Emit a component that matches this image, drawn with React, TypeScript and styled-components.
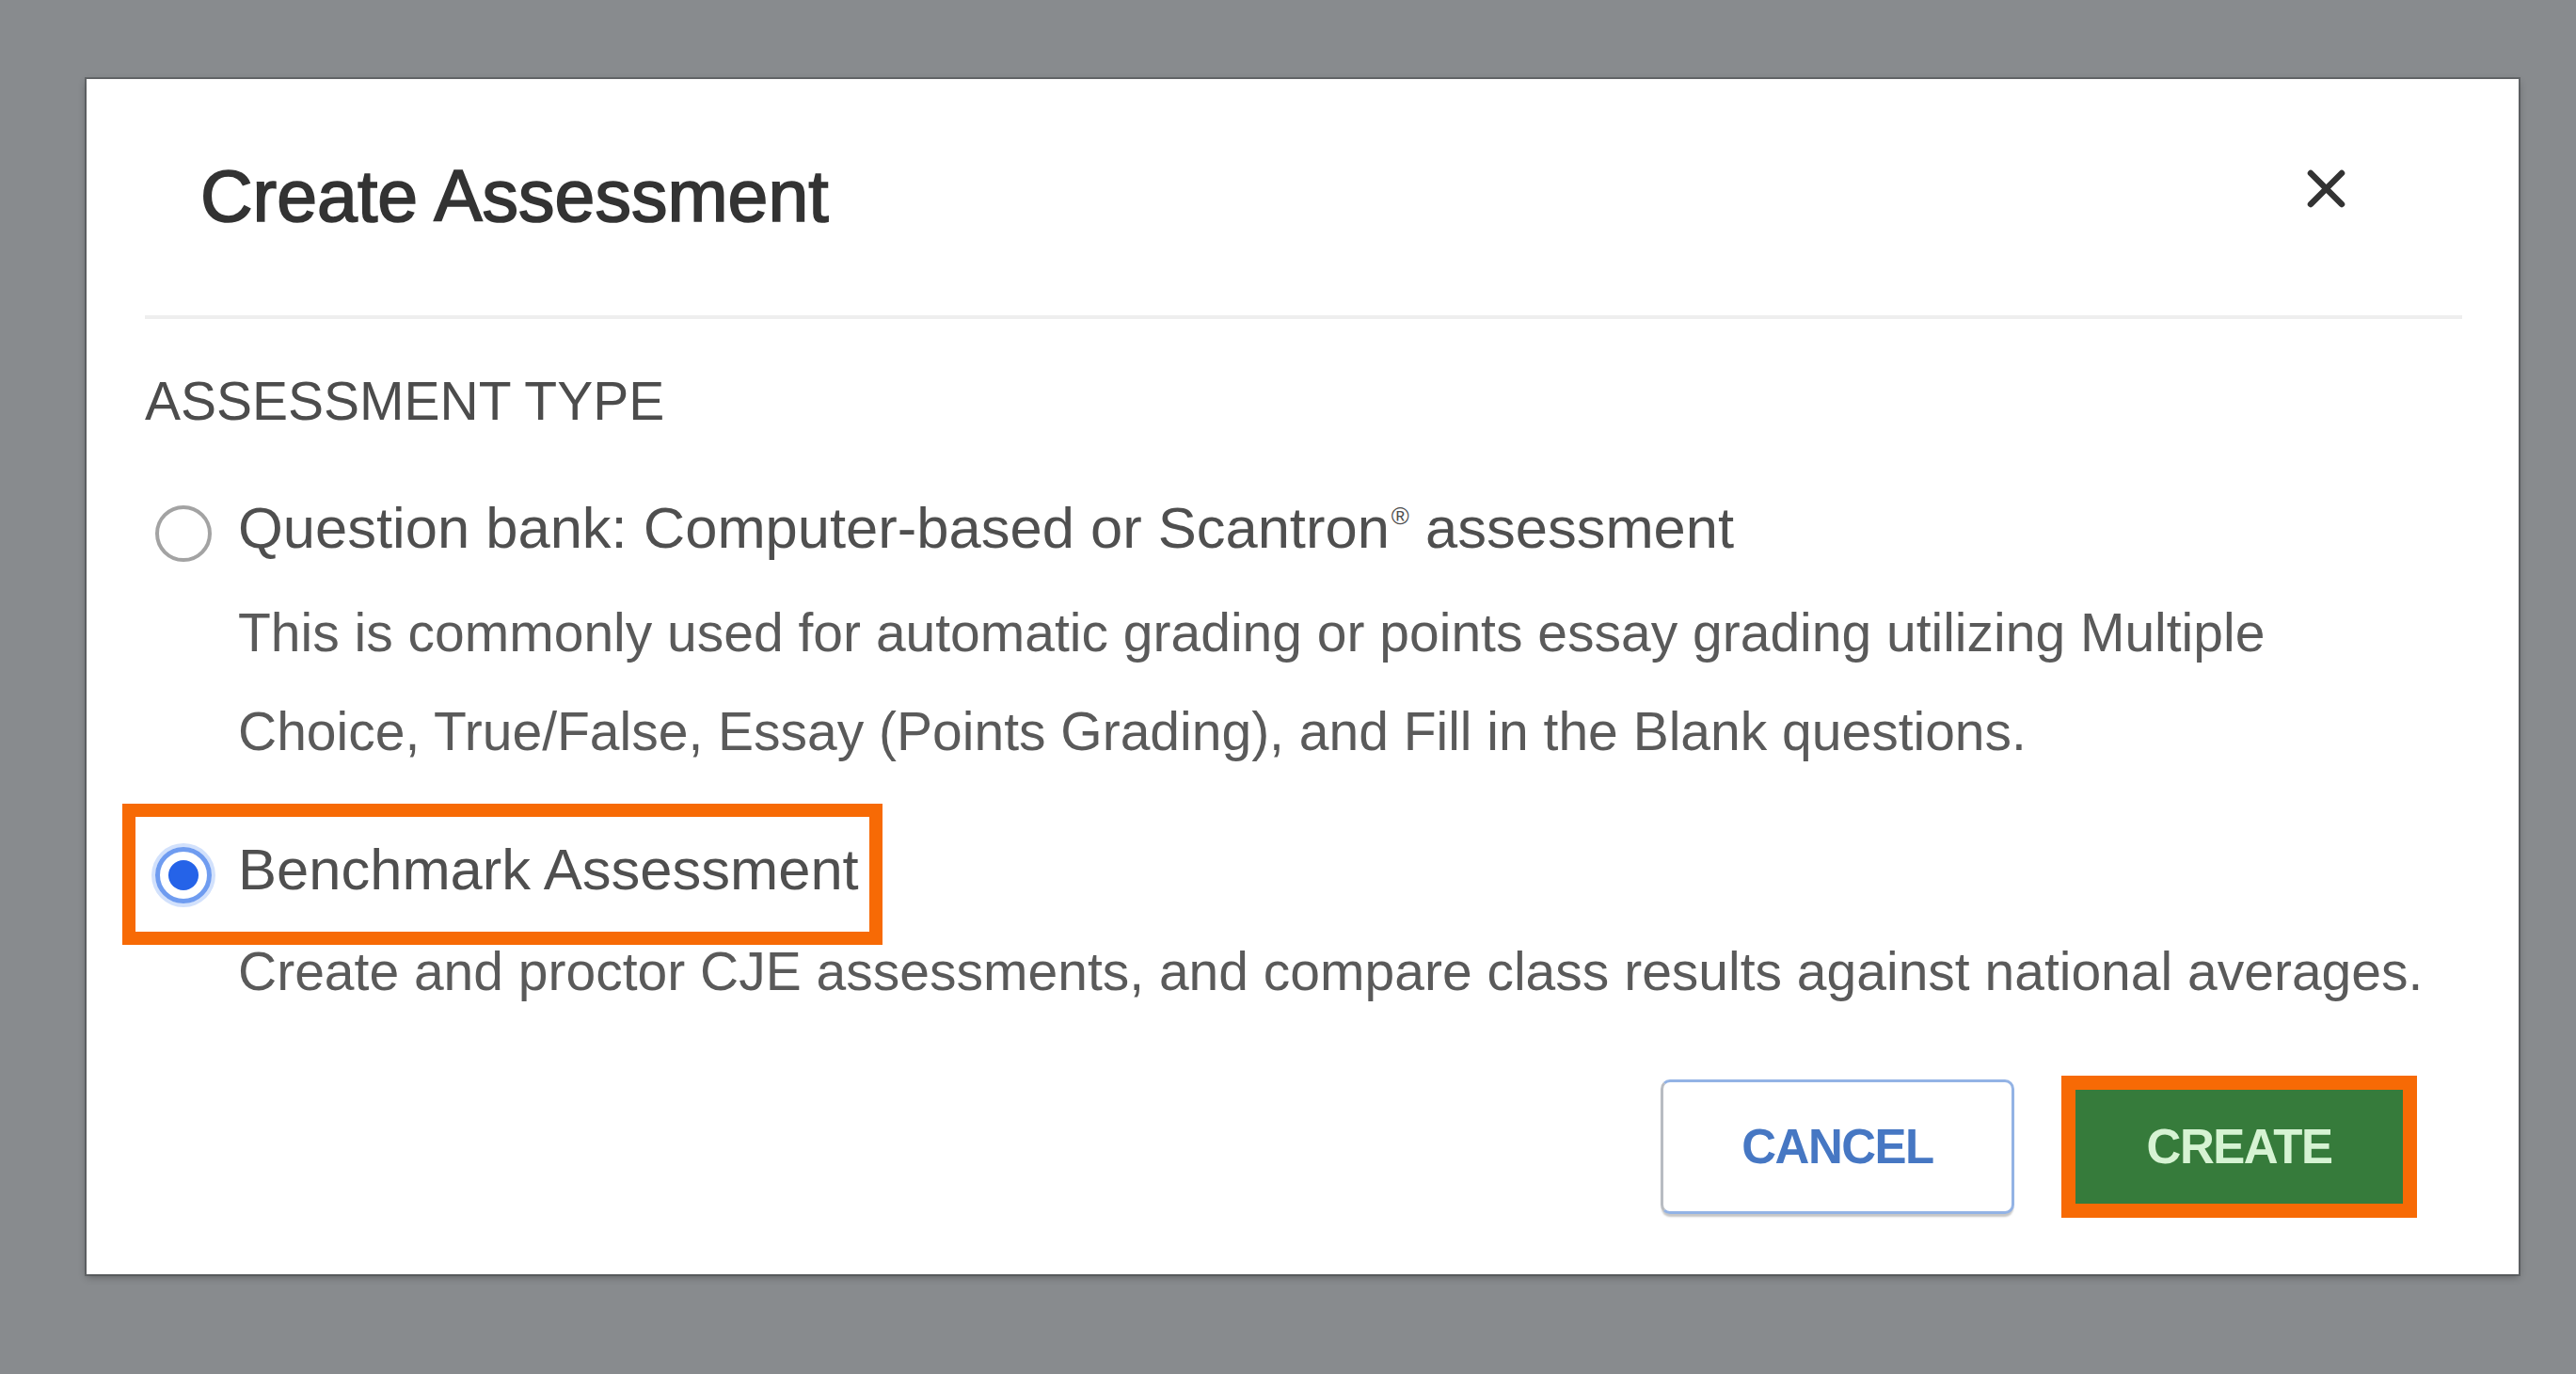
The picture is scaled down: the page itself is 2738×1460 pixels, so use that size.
import styled, { createGlobalStyle } from "styled-components";

const GlobalStyle = createGlobalStyle`
  html, body {
    margin: 0;
    padding: 0;
    background: #888b8e;
  }
  * {
    box-sizing: border-box;
  }
`;

const Page = styled.div`
  width: 2738px;
  height: 1460px;
  padding: 84px 0 0 92px;
  background: #888b8e;
  font-family: "Liberation Sans", Arial, sans-serif;
`;

const Modal = styled.div`
  width: 2585px;
  height: 1270px;
  background: #ffffff;
  padding: 0 60px 0 62px;
  display: flex;
  flex-direction: column;
  box-shadow: 0 0 0 2px rgba(70, 72, 75, 0.55), 0 3px 8px rgba(0, 0, 0, 0.3);
`;

const Header = styled.div`
  height: 251px;
  padding: 86px 0 0 59px;
  display: flex;
  justify-content: space-between;
  align-items: flex-start;
`;

const Title = styled.h2`
  margin: 0;
  font-size: 77px;
  line-height: 77px;
  font-weight: 400;
  color: #333333;
  -webkit-text-stroke: 1.7px #333333;
`;

const CloseButton = styled.button`
  margin: 8px 122px 0 0;
  padding: 0;
  width: 45px;
  height: 45px;
  border: none;
  background: none;
  color: #333333;
  display: flex;
  cursor: pointer;
`;

const Divider = styled.div`
  height: 4px;
  background: #eeeeee;
`;

const Body = styled.div`
  padding-top: 59px;
  display: flex;
  flex-direction: column;
`;

const SectionLabel = styled.div`
  font-size: 57px;
  line-height: 57px;
  color: #4c4c4c;
  text-transform: uppercase;
`;

const Options = styled.div`
  margin-top: 75px;
  display: flex;
  flex-direction: column;
`;

const OptionHead = styled.label<{ $marked?: boolean }>`
  display: flex;
  align-items: flex-start;
  width: fit-content;
  cursor: pointer;
  ${(p) =>
    p.$marked &&
    `
    margin: 24px 0 0 -24px;
    padding: 25px 11px 30px 10px;
    border: 14px solid #f76a05;
  `}
`;

const Radio = styled.span<{ $checked?: boolean }>`
  flex: none;
  width: 60px;
  height: 60px;
  margin: 7px 28px 0 11px;
  border-radius: 50%;
  display: flex;
  align-items: center;
  justify-content: center;
  border: ${(p) => (p.$checked ? "5px solid #6f9cf0" : "4px solid #a3a3a3")};
  box-shadow: ${(p) => (p.$checked ? "0 0 0 4px #d2e1fc" : "none")};
  &::after {
    content: "";
    width: 32px;
    height: 32px;
    border-radius: 50%;
    background: ${(p) => (p.$checked ? "#2563e8" : "transparent")};
  }
`;

const OptionTitle = styled.span`
  font-size: 61.5px;
  line-height: 61px;
  color: #4f4f4f;
  white-space: nowrap;
`;

const Reg = styled.sup`
  font-size: 0.42em;
  line-height: 0;
  vertical-align: 0.95em;
  margin-left: 2px;
`;

const Description = styled.p<{ $marked?: boolean }>`
  margin: ${(p) => (p.$marked ? "-24px" : "23px")} 0 0 99px;
  font-size: 57px;
  line-height: 105px;
  color: #5a5a5a;
  white-space: nowrap;
`;

const Actions = styled.div`
  margin-top: 62px;
  padding-right: 63px;
  display: flex;
  justify-content: flex-end;
  align-items: center;
  gap: 65px;
`;

const Button = styled.button<{ $primary?: boolean }>`
  font-family: "Liberation Sans", Arial, sans-serif;
  font-weight: 700;
  font-size: 51px;
  letter-spacing: -1.5px;
  text-transform: uppercase;
  cursor: pointer;
  ${(p) =>
    p.$primary
      ? `
    width: 348px;
    height: 121px;
    border: none;
    background: #367b3b;
    color: #d6f3d3;
    outline: 15px solid #f76a05;
  `
      : `
    width: 376px;
    height: 143px;
    border: 3px solid #93b3e5;
    border-left-color: #b8bcc2;
    border-radius: 10px;
    background: #ffffff;
    color: #4677c3;
    box-shadow: 0 4px 2px -1px #c6c6c6;
  `}
`;

const CloseIcon = () => (
  <svg width="45" height="45" viewBox="0 0 45 45" fill="none">
    <path
      d="M6 6 L39 39 M39 6 L6 39"
      stroke="currentColor"
      strokeWidth="6.5"
      strokeLinecap="round"
    />
  </svg>
);

const App = () => {
  return (
    <>
      <GlobalStyle />
      <Page>
        <Modal>
          <Header>
            <Title>Create Assessment</Title>
            <CloseButton aria-label="close">
              <CloseIcon />
            </CloseButton>
          </Header>
          <Divider />
          <Body>
            <SectionLabel>Assessment Type</SectionLabel>
            <Options>
              <OptionHead>
                <Radio />
                <OptionTitle>
                  Question bank: Computer-based or Scantron<Reg>®</Reg> assessment
                </OptionTitle>
              </OptionHead>
              <Description>
                This is commonly used for automatic grading or points essay grading utilizing Multiple
                <br />
                Choice, True/False, Essay (Points Grading), and Fill in the Blank questions.
              </Description>
              <OptionHead $marked>
                <Radio $checked />
                <OptionTitle>Benchmark Assessment</OptionTitle>
              </OptionHead>
              <Description $marked>
                Create and proctor CJE assessments, and compare class results against national averages.
              </Description>
            </Options>
            <Actions>
              <Button>Cancel</Button>
              <Button $primary>Create</Button>
            </Actions>
          </Body>
        </Modal>
      </Page>
    </>
  );
};

export default App;
